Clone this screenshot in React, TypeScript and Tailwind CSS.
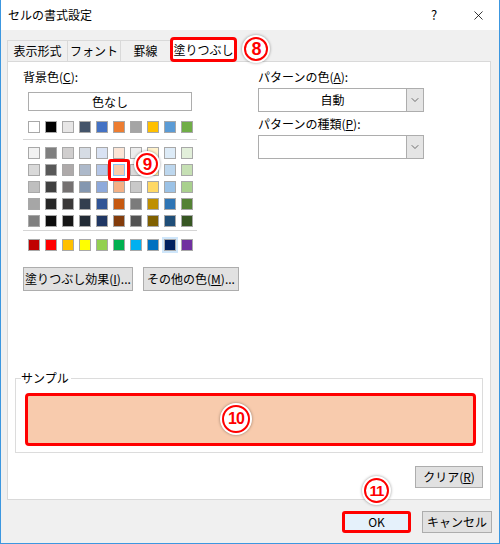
import { X, ChevronDown } from "lucide-react";

const themeRow = ["#FFFFFF", "#000000", "#E7E6E6", "#44546A", "#4472C4", "#ED7D31", "#A5A5A5", "#FFC000", "#5B9BD5", "#70AD47"];

const shadeRows = [
  ["#F2F2F2", "#7F7F7F", "#D0CECE", "#D6DCE4", "#D9E2F3", "#FBE5D6", "#EDEDED", "#FFF2CC", "#DDEBF7", "#E2EFDA"],
  ["#D9D9D9", "#595959", "#AEAAAA", "#ADB9CA", "#B4C6E7", "#F8CBAD", "#DBDBDB", "#FFE699", "#BDD7EE", "#C6E0B4"],
  ["#BFBFBF", "#404040", "#757171", "#8497B0", "#8EA9DB", "#F4B084", "#C9C9C9", "#FFD966", "#9BC2E6", "#A9D08E"],
  ["#A6A6A6", "#262626", "#3A3838", "#333F4F", "#305496", "#C65911", "#7B7B7B", "#BF8F00", "#2F75B5", "#548235"],
  ["#808080", "#0D0D0D", "#161616", "#222B35", "#203764", "#833C0C", "#525252", "#806000", "#1F4E78", "#375623"],
];

const standardRow = ["#C00000", "#FF0000", "#FFC000", "#FFFF00", "#92D050", "#00B050", "#00B0F0", "#0070C0", "#002060", "#7030A0"];

function Swatch({ color, selected, hover }: { color: string; selected?: boolean; hover?: boolean }) {
  return (
    <div
      className={`relative w-[12px] h-[12px] border ${selected ? "border-[#8cc4f4]" : "border-[#a8a8a8]"}`}
      style={{ backgroundColor: color }}
    >
      {selected && <div className="absolute -inset-[6px] border-[3px] border-[#ff0000] rounded-[3px]" />}
      {hover && <div className="absolute -inset-[3px] border-2 border-[#cfe6fa]" />}
    </div>
  );
}

function Badge({ n, size, text, className }: { n: string; size: string; text: string; className: string }) {
  return (
    <div className={`absolute rounded-full bg-white shadow-[0_0_3px_rgba(0,0,0,0.4)] flex items-center justify-center ${size} ${className}`}>
      <div className="absolute inset-[2px] rounded-full border-2 border-[#ff0000]" />
      <span className={`font-['Liberation_Sans',sans-serif] font-bold text-[#ff0000] tracking-[-1px] leading-none ${text}`}>{n}</span>
    </div>
  );
}

function Select({ value }: { value?: string }) {
  return (
    <div className="flex h-[24px] w-[166px] border border-[#adadad] bg-white">
      <div className="flex-1 flex items-center justify-center">{value}</div>
      <div className="w-[17px] h-full bg-[#e5e5e5] border-l border-[#adadad] flex items-center justify-center">
        <ChevronDown size={12} strokeWidth={1.5} className="text-[#444]" />
      </div>
    </div>
  );
}

export default function App() {
  return (
    <div className="relative w-[500px] h-[544px] bg-[#f0f0f0] border border-t-0 border-[#3c97e0] font-['Noto_Sans_CJK_JP','Noto_Sans',sans-serif] text-[12px] leading-[16px] text-black">
      {/* title bar */}
      <div className="h-[30px] bg-white flex items-center pl-[7px]">
        <span className="text-[12px]">セルの書式設定</span>
        <div className="ml-auto flex h-full">
          <div className="w-[46px] flex items-center justify-center text-[13px]">?</div>
          <div className="w-[42px] flex items-center justify-center">
            <X size={15} strokeWidth={1.25} />
          </div>
        </div>
      </div>

      {/* tabs */}
      <div className="mt-[7px] h-[24px] flex items-end pl-[6px]">
        <div className="w-[61px] h-[21px] border border-b-0 border-[#d9d9d9] flex items-center justify-center">表示形式</div>
        <div className="w-[53px] h-[21px] border border-l-0 border-b-0 border-[#d9d9d9] flex items-center justify-center">フォント</div>
        <div className="w-[49px] h-[21px] border-t border-[#d9d9d9] flex items-center justify-center">罫線</div>
        <div className="relative z-10 -mb-px w-[67px] h-[25px] bg-white border-[3px] border-[#ff0000] rounded-[4px] flex items-center justify-center">塗りつぶし</div>
      </div>

      {/* panel */}
      <div className="ml-[6px] mr-[8px] h-[439px] bg-white border border-[#d9d9d9] flex flex-col pt-[7px]">
        <div className="flex pl-[15px]">
          <div className="w-[235px]">
            <div>
              背景色(<span className="underline">C</span>):
            </div>
            <div className="mt-[7px] ml-[5px] w-[164px] h-[19px] border border-[#adadad] bg-white flex items-center justify-center">色なし</div>
            <div className="mt-[10px] ml-[5px] flex gap-[5px]">
              {themeRow.map((c) => (
                <Swatch key={c} color={c} />
              ))}
            </div>
            <div className="mt-[6px] w-[174px] h-px bg-[#d5d5d5]" />
            <div className="mt-[7px] ml-[5px] flex flex-col gap-[5px]">
              {shadeRows.map((row, r) => (
                <div key={r} className="flex gap-[5px]">
                  {row.map((c, i) => (
                    <Swatch key={i} color={c} selected={r === 1 && i === 5} />
                  ))}
                </div>
              ))}
            </div>
            <div className="mt-[3px] w-[174px] h-px bg-[#d5d5d5]" />
            <div className="mt-[8px] ml-[5px] flex gap-[5px]">
              {standardRow.map((c, i) => (
                <Swatch key={c} color={c} hover={i === 8} />
              ))}
            </div>
            <div className="mt-[16px] flex gap-[10px]">
              <div className="w-[110px] h-[24px] bg-[#e1e1e1] border border-[#adadad] flex items-center justify-center whitespace-nowrap">
                塗りつぶし効果(<span className="underline">I</span>)...
              </div>
              <div className="w-[96px] h-[24px] bg-[#e1e1e1] border border-[#adadad] flex items-center justify-center whitespace-nowrap">
                その他の色(<span className="underline">M</span>)...
              </div>
            </div>
          </div>

          <div className="w-[166px]">
            <div>
              パターンの色(<span className="underline">A</span>):
            </div>
            <div className="mt-[3px]">
              <Select value="自動" />
            </div>
            <div className="mt-[4px]">
              パターンの種類(<span className="underline">P</span>):
            </div>
            <div className="mt-[3px]">
              <Select />
            </div>
          </div>
        </div>

        <fieldset className="mt-[79px] mx-[7px] border border-[#dcdcdc]">
          <legend className="ml-[5px] pr-[2px]">サンプル</legend>
          <div className="mt-[7px] ml-[9px] mr-[6px] mb-[6px] h-[53px] bg-[#f8cbad] border-[3px] border-[#ff0000] rounded-[4px]" />
        </fieldset>

        <div className="mt-[13px] mr-[7px] self-end w-[68px] h-[22px] bg-[#e1e1e1] border border-[#adadad] flex items-center justify-center">
          クリア(<span className="underline">R</span>)
        </div>
      </div>

      {/* bottom buttons */}
      <div className="mt-[11px] mr-[7px] flex justify-end gap-[11px]">
        <div className="w-[69px] h-[22px] bg-[#e5f1fb] border-[3px] border-[#ff0000] rounded-[3px] flex items-center justify-center">OK</div>
        <div className="w-[70px] h-[22px] bg-[#e1e1e1] border border-[#adadad] flex items-center justify-center">キャンセル</div>
      </div>

      <Badge n="8" size="w-[28px] h-[28px]" text="text-[18px]" className="left-[241px] top-[35px]" />
      <Badge n="9" size="w-[26px] h-[26px]" text="text-[17px]" className="left-[133px] top-[151px]" />
      <Badge n="10" size="w-[32px] h-[32px]" text="text-[16px]" className="left-[219px] top-[403px]" />
      <Badge n="11" size="w-[29px] h-[29px]" text="text-[15px]" className="left-[361px] top-[476px]" />
    </div>
  );
}
